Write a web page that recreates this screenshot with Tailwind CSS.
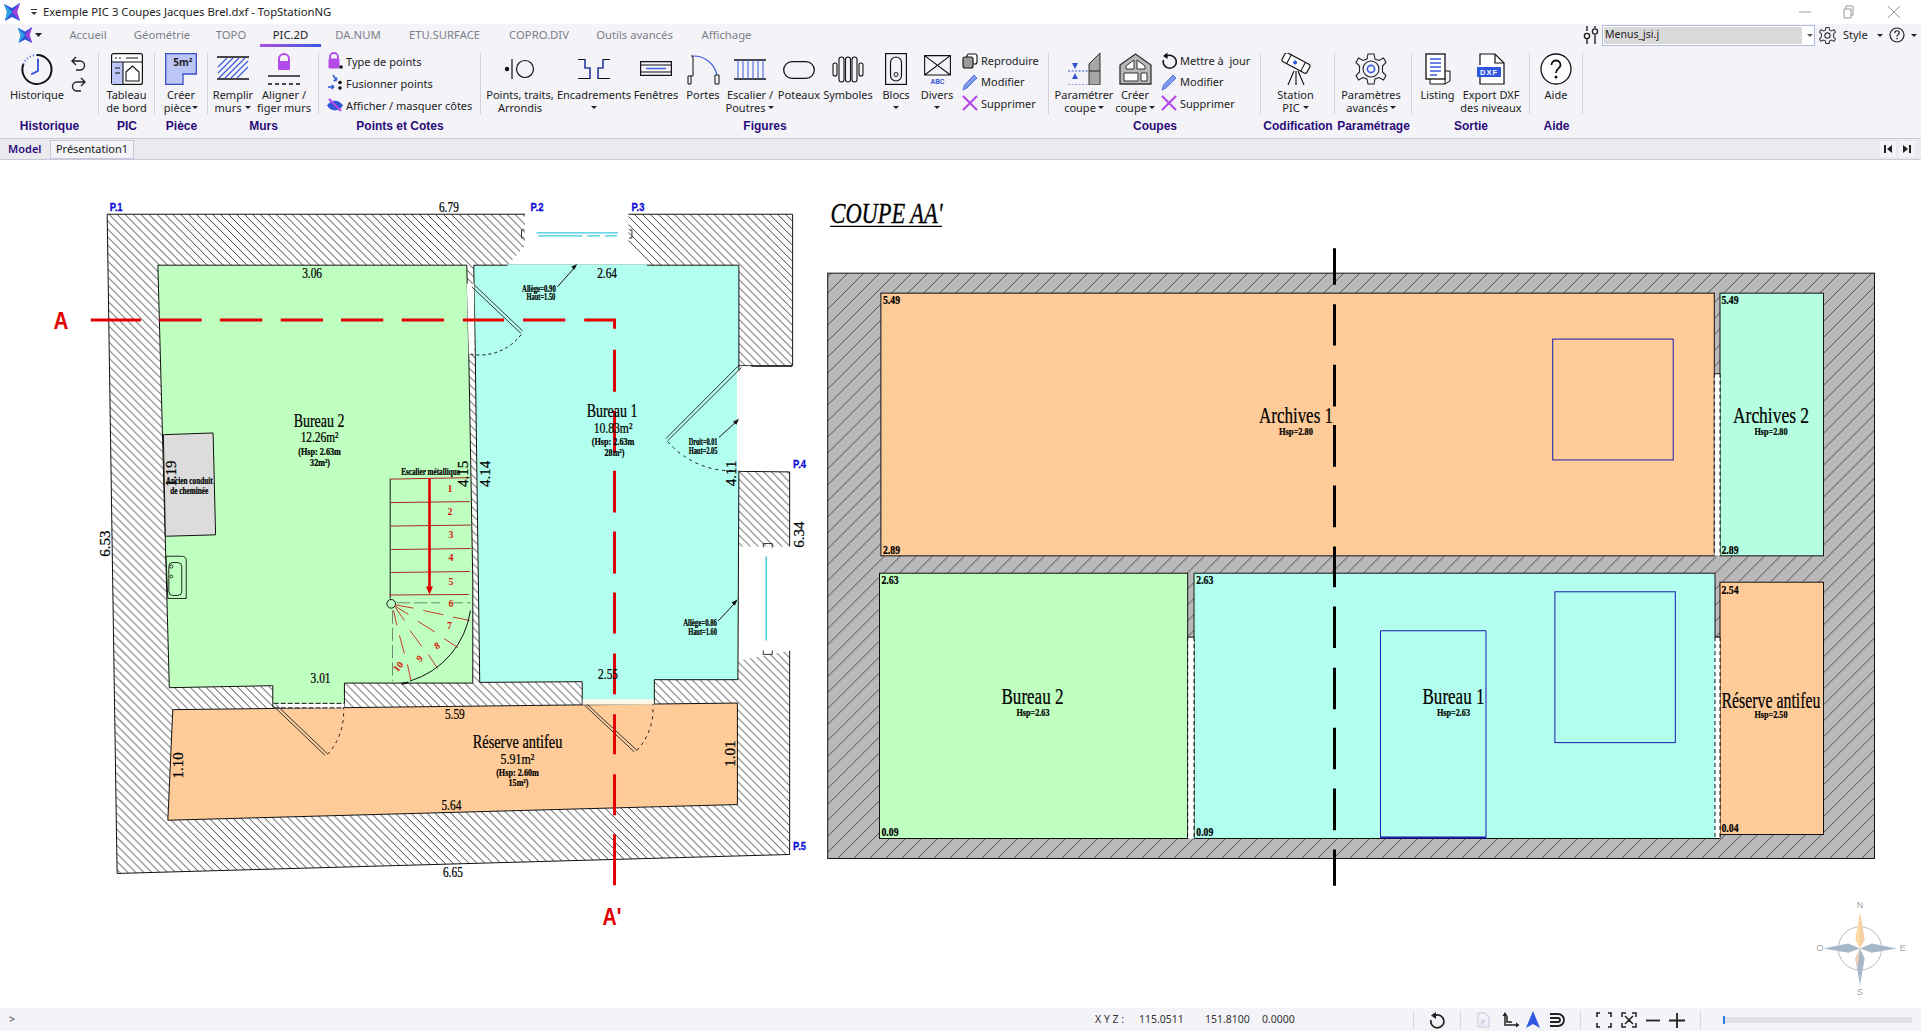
<!DOCTYPE html>
<html lang="fr">
<head>
<meta charset="utf-8">
<title>TopStationNG</title>
<script src="https://cdn.jsdelivr.net/npm/@tailwindcss/browser@4"></script>
</head>
<body class="bg-white">
<div class="w-[1921px] h-[1031px] flex flex-col overflow-hidden bg-white text-[#222] font-['Noto_Sans',sans-serif] text-[11px]">

  <!-- Title bar -->
  <div class="h-[24px] shrink-0 flex items-center bg-white">
    <svg class="ml-[2px] w-[20px] h-[20px]" viewBox="0 0 20 20"><path d="M2 2 L10 6 L18 1 L15 10 L18 19 L10 15 L3 19 L5 10 Z" fill="#2f56d8"/><path d="M2 2 L10 10 L3 19 L5 10Z" fill="#2aa5e0"/><path d="M18 1 L10 10 L18 19 L15 10Z" fill="#a23fdc"/></svg>
    <svg class="ml-[8px] w-[8px] h-[8px]" viewBox="0 0 8 8"><path d="M1 1.5H7" stroke="#333"/><path d="M1 4H7L4 7Z" fill="#333"/></svg>
    <span class="ml-[5px] text-[11.3px] whitespace-nowrap text-[#222]">Exemple PIC 3 Coupes Jacques Brel.dxf - TopStationNG</span>
    <div class="ml-auto flex items-center text-[#9a9a9a]">
      <svg class="w-[14px] h-[14px]" viewBox="0 0 14 14"><path d="M1 7H13" stroke="#999"/></svg>
      <svg class="ml-[29px] w-[14px] h-[14px]" viewBox="0 0 14 14"><path d="M3 4H10V13H3Z M5 4V1H12V10H10" fill="none" stroke="#999"/></svg>
      <svg class="ml-[32px] mr-[20px] w-[14px] h-[14px]" viewBox="0 0 14 14"><path d="M1 1L13 13M13 1L1 13" stroke="#999"/></svg>
    </div>
  </div>

  <!-- Ribbon -->
  <div class="h-[115px] shrink-0 bg-[#f3f3f8] border-b border-[#c9c7da] flex flex-col">
    <!-- tabs row -->
    <div class="h-[22px] shrink-0 flex items-center text-[#7d8088] text-[11.3px]">
      <div class="w-[56px] h-full flex items-center">
        <svg class="ml-[16px] w-[18px] h-[18px]" viewBox="0 0 20 20"><path d="M2 2 L10 6 L18 1 L15 10 L18 19 L10 15 L3 19 L5 10 Z" fill="#2f56d8"/><path d="M2 2 L10 10 L3 19 L5 10Z" fill="#2aa5e0"/><path d="M18 1 L10 10 L18 19 L15 10Z" fill="#a23fdc"/></svg>
        <svg class="ml-[1px] w-[7px] h-[4px]" viewBox="0 0 7 4"><path d="M0 0H7L3.5 4Z" fill="#222"/></svg>
      </div>
      <div class="w-[64px] text-center">Accueil</div>
      <div class="w-[84px] text-center">Géométrie</div>
      <div class="w-[54px] text-center">TOPO</div>
      <div class="ml-[2px] w-[61px] h-full flex items-center justify-center text-[#222] relative">PIC.2D
        <div class="absolute left-0 right-0 bottom-[-1px] h-[3px] bg-gradient-to-r from-[#a74fe0] to-[#3456dc]"></div>
      </div>
      <div class="w-[74px] text-center">DA.NUM</div>
      <div class="w-[99px] text-center">ETU.SURFACE</div>
      <div class="w-[90px] text-center">COPRO.DIV</div>
      <div class="w-[101px] text-center">Outils avancés</div>
      <div class="w-[83px] text-center">Affichage</div>
      <!-- right-hand tools -->
      <div class="ml-auto w-[340px] h-full flex items-center text-[#222]">
        <svg class="ml-[1px] w-[18px] h-[20px]" viewBox="0 0 18 20"><path d="M5 1V6M5 14V19M13 1V3M13 10V19" stroke="#222" stroke-width="1.4"/><circle cx="5" cy="11" r="2.6" fill="none" stroke="#222" stroke-width="1.4"/><circle cx="13" cy="6.5" r="2.6" fill="none" stroke="#222" stroke-width="1.4"/></svg>
        <div class="ml-[2px] w-[213px] h-[21px] border border-[#aebbdb] bg-white flex items-center p-[1px]">
          <div class="w-[198px] h-full bg-[#d9d9d9] pl-[1px] flex items-center text-[10.5px] text-[#222]">Menus_jsi.j</div>
          <svg class="ml-[5px] w-[6px] h-[3px]" viewBox="0 0 6 3"><path d="M0 0H6L3 3Z" fill="#555"/></svg>
        </div>
        <svg class="ml-[4px] w-[17px] h-[17px]" viewBox="0 0 32 32" fill="none"><path d="M13 1H19L20 6L24 7.5L28.5 5L31 9.500L27.500 13V19L31 22.500L28.500 27L24 24.500L20 26L19 31H13L12 26L8 24.500L3.500 27L1 22.500L4.500 19V13L1 9.500L3.500 5L8 7.500L12 6Z" stroke="#333" stroke-width="2"/><circle cx="16" cy="16" r="5" stroke="#333" stroke-width="2"/></svg>
        <span class="ml-[7px] text-[11px]">Style</span>
        <svg class="ml-[9px] w-[6px] h-[3px]" viewBox="0 0 6 3"><path d="M0 0H6L3 3Z" fill="#222"/></svg>
        <svg class="ml-[6px] w-[16px] h-[16px]" viewBox="0 0 16 16"><circle cx="8" cy="8" r="7" fill="none" stroke="#222" stroke-width="1.2"/><path d="M5.8 6c0-3 4.4-3 4.4 0 0 1.600-2.200 1.700-2.200 3.400" fill="none" stroke="#222" stroke-width="1.2"/><circle cx="8" cy="11.6" r=".8" fill="#222"/></svg>
        <svg class="ml-[6px] w-[6px] h-[3px]" viewBox="0 0 6 3"><path d="M0 0H6L3 3Z" fill="#222"/></svg>
      </div>
    </div>

    <!-- groups -->
    <div class="flex-1 flex pt-[7px] text-[11px] leading-[13px] text-center text-[#222]">

      <!-- Historique -->
      <div class="w-[99px] flex flex-col">
        <div class="h-[61px] border-r border-[#d2d2da] flex">
          <div class="ml-[3px] w-[68px] flex flex-col items-center">
            <div class="h-[35px]"><svg class="w-[34px] h-[33px]" viewBox="0 0 34 34"><path d="M17 2A15 15 0 1 1 3 11.5" fill="none" stroke="#111" stroke-width="2"/><path d="M3 11.5A15 15 0 0 1 17 2" fill="none" stroke="#3b5bdb" stroke-width="2" stroke-dasharray="1 2.4"/><path d="M18 6V18.5L11 22" fill="none" stroke="#3b5bdb" stroke-width="2"/></svg></div>
            <div class="whitespace-nowrap">Historique</div>
          </div>
          <div class="w-[14px] flex flex-col items-center">
            <svg class="mt-[2px] w-[17px] h-[18px] shrink-0" viewBox="0 0 17 18"><path d="M6 2L2 6L6 10M2 6H10A4.5 4.5 0 0 1 10 15H6" fill="none" stroke="#222" stroke-width="1.4"/></svg>
            <svg class="mt-[3px] w-[17px] h-[18px] shrink-0" viewBox="0 0 17 18"><path d="M11 2L15 6L11 10M15 6H7A4.5 4.5 0 0 0 7 15H11" fill="none" stroke="#222" stroke-width="1.4"/></svg>
          </div>
        </div>
        <div class="flex-1 flex items-center justify-center font-['Liberation_Sans',sans-serif] font-bold text-[12px] text-[#2c0c7a]">Historique</div>
      </div>

      <!-- PIC -->
      <div class="w-[56px] flex flex-col">
        <div class="h-[61px] border-r border-[#d2d2da] flex flex-col items-center">
          <div class="h-[35px]"><svg class="w-[32px] h-[32px]" viewBox="0 0 32 32"><rect x=".6" y=".6" width="30.8" height="30.8" rx="2" fill="#fff" stroke="#111" stroke-width="1.2"/><rect x="1" y="9" width="11" height="22" fill="#bcc6f7"/><path d="M1 9H31M12 9V31M4 5H6M8 5H10M15 5H27M4 15H9M4 20H9" stroke="#111" stroke-width="1.1" fill="none"/><path d="M15 19L21.5 13L28 19V28H15Z" fill="#fff" stroke="#111" stroke-width="1.1"/></svg></div>
          <div>Tableau</div><div class="whitespace-nowrap">de bord</div>
        </div>
        <div class="flex-1 flex items-center justify-center font-['Liberation_Sans',sans-serif] font-bold text-[12px] text-[#2c0c7a]">PIC</div>
      </div>

      <!-- Pièce -->
      <div class="w-[53px] flex flex-col">
        <div class="h-[61px] border-r border-[#d2d2da] flex flex-col items-center">
          <div class="h-[35px]"><svg class="w-[32px] h-[32px]" viewBox="0 0 32 32"><path d="M.7.7H31.3V21H18V31.3H.7Z" fill="#bcc6f7" stroke="#3a4fc4" stroke-width="1.3"/><text x="18" y="13" text-anchor="middle" font-size="10" font-weight="700" font-family="Noto Sans" fill="#222">5m²</text></svg></div>
          <div>Créer</div>
          <div class="flex items-center whitespace-nowrap">pièce<svg class="ml-[1px] w-[6px] h-[3px]" viewBox="0 0 6 3"><path d="M0 0H6L3 3Z" fill="#222"/></svg></div>
        </div>
        <div class="flex-1 flex items-center justify-center font-['Liberation_Sans',sans-serif] font-bold text-[12px] text-[#2c0c7a]">Pièce</div>
      </div>

      <!-- Murs -->
      <div class="w-[111px] flex flex-col">
        <div class="h-[61px] border-r border-[#d2d2da] flex">
          <div class="w-[50px] flex flex-col items-center">
            <div class="h-[35px] pt-[3px]"><svg class="w-[32px] h-[24px]" viewBox="0 0 32 24"><path d="M2 22L22 2M8 22L28 2M14 22L31 5M20 22L31 11M1 17L16 2M1 11L10 2" stroke="#3b5bdb" stroke-width="1.2"/><path d="M0 1H32M0 23H32" stroke="#111" stroke-width="1.4" fill="none"/></svg></div>
            <div>Remplir</div>
            <div class="flex items-center">murs<svg class="ml-[4px] w-[6px] h-[3px]" viewBox="0 0 6 3"><path d="M0 0H6L3 3Z" fill="#222"/></svg></div>
          </div>
          <div class="w-[52px] flex flex-col items-center">
            <div class="h-[35px]"><svg class="w-[32px] h-[32px]" viewBox="0 0 32 32"><path d="M11 8V5A5 5 0 0 1 21 5V8" transform="translate(0 1)" fill="none" stroke="#b44be8" stroke-width="2"/><rect x="10" y="8" width="12" height="9" rx="1" fill="#b44be8"/><path d="M0 23H32" stroke="#111" stroke-width="1.4"/><path d="M0 31H32" stroke="#111" stroke-width="1.4" stroke-dasharray="4 3"/></svg></div>
            <div class="whitespace-nowrap">Aligner /</div><div class="whitespace-nowrap">figer murs</div>
          </div>
        </div>
        <div class="flex-1 flex items-center justify-center font-['Liberation_Sans',sans-serif] font-bold text-[12px] text-[#2c0c7a]">Murs</div>
      </div>

      <!-- Points et Cotes -->
      <div class="w-[162px] flex flex-col">
        <div class="h-[61px] border-r border-[#d2d2da] pl-[8px]">
          <div class="-mt-[3px] flex flex-col text-left">
            <div class="h-[22px] flex items-center"><svg class="w-[16px] h-[18px] shrink-0" viewBox="0 0 16 18"><path d="M3 7V5A4 4 0 0 1 11 5V7" fill="none" stroke="#b44be8" stroke-width="1.8"/><rect x="1.5" y="6.5" width="11" height="10" rx="1.5" fill="#b44be8"/><circle cx="14" cy="15" r="1.8" fill="#111"/></svg><span class="ml-[3px] whitespace-nowrap">Type de points</span></div>
            <div class="h-[22px] flex items-center"><svg class="w-[16px] h-[18px] shrink-0" viewBox="0 0 16 18"><path d="M6 1L9.5 6.5M9.5 6.5V3.5M9.5 6.5H6.5M1 13H7M7 13L4.5 11M7 13L4.5 15" fill="none" stroke="#2f56d8" stroke-width="1.4"/><circle cx="13" cy="8.5" r="1.8" fill="#111"/><circle cx="13" cy="14" r="1.8" fill="#111"/></svg><span class="ml-[3px] whitespace-nowrap">Fusionner points</span></div>
            <div class="h-[22px] flex items-center"><svg class="w-[16px] h-[18px] shrink-0" viewBox="0 0 16 18"><path d="M0 9.5C4 3 12 3 16 9.5C12 16 4 16 0 9.5Z" fill="#2f56d8"/><path d="M2 3L14 15" stroke="#b44be8" stroke-width="2.4"/></svg><span class="ml-[3px] whitespace-nowrap">Afficher / masquer côtes</span></div>
          </div>
        </div>
        <div class="flex-1 flex items-center justify-center font-['Liberation_Sans',sans-serif] font-bold text-[12px] text-[#2c0c7a]">Points et Cotes</div>
      </div>

      <!-- Figures -->
      <div class="w-[568px] flex flex-col">
        <div class="h-[61px] border-r border-[#d2d2da] flex">
          <div class="w-[78px] flex flex-col items-center">
            <div class="h-[35px] pt-[5px]"><svg class="w-[32px] h-[22px]" viewBox="0 0 32 22"><circle cx="3" cy="11" r="2.2" fill="#111"/><path d="M8 1V21" stroke="#111" stroke-width="1.2"/><circle cx="21" cy="11" r="8.5" fill="none" stroke="#111" stroke-width="1.2"/></svg></div>
            <div class="whitespace-nowrap">Points, traits,</div><div>Arrondis</div>
          </div>
          <div class="w-[70px] flex flex-col items-center">
            <div class="h-[35px] pt-[5px]"><svg class="w-[32px] h-[22px]" viewBox="0 0 32 22"><path d="M0 1.500H7V10H12V20.500H0" fill="none" stroke="#111" stroke-width="1.2"/><path d="M32 1.500H25V10H20V20.500H32" fill="none" stroke="#111" stroke-width="1.2"/><path d="M7 1.500V10H12V20.500M25 1.500V10H20V20.500" fill="none" stroke="#3b5bdb" stroke-width="1.2"/></svg></div>
            <div>Encadrements</div>
            <svg class="mt-[5px] w-[6px] h-[3px]" viewBox="0 0 6 3"><path d="M0 0H6L3 3Z" fill="#222"/></svg>
          </div>
          <div class="w-[54px] flex flex-col items-center">
            <div class="h-[35px] pt-[8px]"><svg class="w-[32px] h-[15px]" viewBox="0 0 32 15"><path d="M.6.6H31.400V14.400H.6Z" fill="none" stroke="#111" stroke-width="1.2"/><path d="M0 4H32M0 11H32" stroke="#111"/><path d="M6 7.500H26" stroke="#3b5bdb" stroke-width="1.4"/></svg></div>
            <div>Fenêtres</div>
          </div>
          <div class="w-[40px] flex flex-col items-center">
            <div class="h-[35px] pt-[2px]"><svg class="w-[33px] h-[30px]" viewBox="0 0 33 30"><path d="M4 1H6V21H4V29H1V21H4" fill="none" stroke="#111" stroke-width="1"/><path d="M28 20H32V29H28Z" fill="none" stroke="#111"/><path d="M6 1A24 24 0 0 1 30 20" fill="none" stroke="#3b5bdb" stroke-width="1.2"/></svg></div>
            <div>Portes</div>
          </div>
          <div class="w-[54px] flex flex-col items-center">
            <div class="h-[35px] pt-[6px]"><svg class="w-[32px] h-[21px]" viewBox="0 0 32 21"><path d="M0 1H32M0 20H32" stroke="#111" stroke-width="1.4"/><path d="M4 1V20M9 1V20M14 1V20M19 1V20M24 1V20M29 1V20" stroke="#3b5bdb"/></svg></div>
            <div class="whitespace-nowrap">Escalier /</div>
            <div class="flex items-center">Poutres<svg class="ml-[3px] w-[6px] h-[3px]" viewBox="0 0 6 3"><path d="M0 0H6L3 3Z" fill="#222"/></svg></div>
          </div>
          <div class="w-[44px] flex flex-col items-center">
            <div class="h-[35px] pt-[8px]"><svg class="w-[32px] h-[18px]" viewBox="0 0 32 18"><rect x=".7" y=".7" width="30.6" height="16.6" rx="8.3" fill="none" stroke="#111" stroke-width="1.3"/></svg></div>
            <div>Poteaux</div>
          </div>
          <div class="w-[54px] flex flex-col items-center">
            <div class="h-[35px] pt-[3px]"><svg class="w-[32px] h-[27px]" viewBox="0 0 32 27"><g fill="none" stroke="#111" stroke-width="1.1"><rect x="1" y="7" width="4" height="13" rx="2"/><rect x="7" y="1" width="5" height="25" rx="2.5"/><rect x="13.5" y="1" width="5" height="25" rx="2.5"/><rect x="20" y="1" width="5" height="25" rx="2.5"/><rect x="27" y="7" width="4" height="13" rx="2"/></g></svg></div>
            <div>Symboles</div>
          </div>
          <div class="w-[42px] flex flex-col items-center">
            <div class="h-[35px]"><svg class="w-[22px] h-[32px]" viewBox="0 0 22 32"><rect x=".6" y=".6" width="20.8" height="30.8" fill="none" stroke="#111" stroke-width="1.2"/><rect x="5.5" y="4" width="11" height="24" rx="5.5" fill="none" stroke="#111" stroke-width="1.2"/><circle cx="11" cy="21.5" r="2" fill="none" stroke="#111"/></svg></div>
            <div>Blocs</div>
            <svg class="mt-[5px] w-[6px] h-[3px]" viewBox="0 0 6 3"><path d="M0 0H6L3 3Z" fill="#222"/></svg>
          </div>
          <div class="w-[40px] flex flex-col items-center">
            <div class="h-[35px] pt-[2px]"><svg class="w-[27px] h-[30px]" viewBox="0 0 27 30"><path d="M.6.6H26.400V20H.6ZM.6.6L26.400 20M26.400.6L.6 20" fill="none" stroke="#111" stroke-width="1.1"/><text x="13.5" y="29" text-anchor="middle" font-size="7.5" font-weight="700" font-family="Liberation Sans" fill="#2f56d8" textLength="14" lengthAdjust="spacingAndGlyphs">ABC</text></svg></div>
            <div>Divers</div>
            <svg class="mt-[5px] w-[6px] h-[3px]" viewBox="0 0 6 3"><path d="M0 0H6L3 3Z" fill="#222"/></svg>
          </div>
          <div class="pl-[5px] -mt-[3px] flex flex-col text-left">
            <div class="h-[22px] flex items-center"><svg class="w-[16px] h-[18px] shrink-0" viewBox="0 0 16 18"><rect x="5" y="2" width="10" height="10" rx="2" fill="#fff" stroke="#111" stroke-width="1.1"/><rect x="1" y="5" width="10" height="11" rx="2" fill="#9a9a9a" stroke="#111" stroke-width="1.1"/></svg><span class="ml-[3px]">Reproduire</span></div>
            <div class="h-[22px] flex items-center"><svg class="w-[16px] h-[18px] shrink-0" viewBox="0 0 16 18"><path d="M1 17L2.500 12L12 2L15 5L5 15Z" fill="#7f9bec" stroke="#3b5bdb" stroke-width=".8"/></svg><span class="ml-[3px]">Modifier</span></div>
            <div class="h-[22px] flex items-center"><svg class="w-[16px] h-[18px] shrink-0" viewBox="0 0 16 18"><path d="M1 2L15 16M15 2L1 16" stroke="#b44be8" stroke-width="2.2"/></svg><span class="ml-[3px]">Supprimer</span></div>
          </div>
        </div>
        <div class="flex-1 flex items-center justify-center font-['Liberation_Sans',sans-serif] font-bold text-[12px] text-[#2c0c7a]">Figures</div>
      </div>

      <!-- Coupes -->
      <div class="w-[212px] flex flex-col">
        <div class="h-[61px] border-r border-[#d2d2da] flex">
          <div class="w-[70px] flex flex-col items-center">
            <div class="h-[35px]"><svg class="w-[33px] h-[32px]" viewBox="0 0 33 32"><path d="M21 32V11L32 0V32Z" fill="#a6a6a6" stroke="#333"/><path d="M21 18H32" stroke="#222"/><path d="M0 18H21" stroke="#2f56d8" stroke-dasharray="2 1.5"/><path d="M0 32H21" stroke="#2f56d8" stroke-dasharray="2 1.5"/><path d="M4 10L7 16L10 10ZM4 26L7 20L10 26Z" fill="#2f56d8"/></svg></div>
            <div class="whitespace-nowrap">Paramétrer</div>
            <div class="flex items-center">coupe<svg class="ml-[2px] w-[6px] h-[3px]" viewBox="0 0 6 3"><path d="M0 0H6L3 3Z" fill="#222"/></svg></div>
          </div>
          <div class="w-[32px] flex flex-col items-center">
            <div class="h-[35px] shrink-0"><svg class="w-[33px] h-[32px]" viewBox="0 0 33 32"><path d="M1 12L16.5 1L32 12V31H1Z" fill="#b8b8b8" stroke="#333" stroke-width="1.3"/><path d="M15 7L7 13V16H15ZM18 7V16H26V13ZM5 20H19V28H5ZM22 20H28V28H22Z" fill="#fff" stroke="#333"/></svg></div>
            <div>Créer</div>
            <div class="flex items-center shrink-0">coupe<svg class="ml-[2px] w-[6px] h-[3px]" viewBox="0 0 6 3"><path d="M0 0H6L3 3Z" fill="#222"/></svg></div>
          </div>
          <div class="pl-[10px] -mt-[3px] flex flex-col text-left">
            <div class="h-[22px] flex items-center"><svg class="w-[16px] h-[18px] shrink-0" viewBox="0 0 16 18"><path d="M5 4.500A6.500 6.500 0 1 1 2.500 8" fill="none" stroke="#111" stroke-width="1.6"/><path d="M6.500 0.500L6.500 7L2 4Z" fill="#111"/></svg><span class="ml-[3px] whitespace-pre">Mettre à  jour</span></div>
            <div class="h-[22px] flex items-center"><svg class="w-[16px] h-[18px] shrink-0" viewBox="0 0 16 18"><path d="M1 17L2.500 12L12 2L15 5L5 15Z" fill="#7f9bec" stroke="#3b5bdb" stroke-width=".8"/></svg><span class="ml-[3px]">Modifier</span></div>
            <div class="h-[22px] flex items-center"><svg class="w-[16px] h-[18px] shrink-0" viewBox="0 0 16 18"><path d="M1 2L15 16M15 2L1 16" stroke="#b44be8" stroke-width="2.2"/></svg><span class="ml-[3px]">Supprimer</span></div>
          </div>
        </div>
        <div class="flex-1 flex items-center justify-center font-['Liberation_Sans',sans-serif] font-bold text-[12px] text-[#2c0c7a]">Coupes</div>
      </div>

      <!-- Codification -->
      <div class="w-[74px] flex flex-col">
        <div class="h-[61px] border-r border-[#d2d2da] pr-[4px] flex flex-col items-center">
          <div class="h-[35px]"><svg class="w-[32px] h-[32px]" viewBox="0 0 32 32"><g transform="rotate(28 16 10)"><rect x="2" y="5" width="28" height="10" rx="2" fill="#fff" stroke="#111" stroke-width="1.2"/><path d="M8 5V15M24 5V15" stroke="#111"/><circle cx="15" cy="10" r="2" fill="#2f56d8"/></g><path d="M14 18L8 32M16 18V32M18 18L24 32" stroke="#111" stroke-width="1.1"/></svg></div>
          <div>Station</div>
          <div class="flex items-center">PIC<svg class="ml-[3px] w-[6px] h-[3px]" viewBox="0 0 6 3"><path d="M0 0H6L3 3Z" fill="#222"/></svg></div>
        </div>
        <div class="flex-1 flex items-center justify-center font-['Liberation_Sans',sans-serif] font-bold text-[12px] text-[#2c0c7a]">Codification</div>
      </div>

      <!-- Paramétrage -->
      <div class="w-[77px] flex flex-col">
        <div class="h-[61px] border-r border-[#d2d2da] pr-[4px] flex flex-col items-center">
          <div class="h-[35px]"><svg class="w-[32px] h-[32px]" viewBox="0 0 32 32" fill="none"><path d="M13 1H19L20 6L24 7.500L28.500 5L31 9.500L27.500 13V19L31 22.500L28.500 27L24 24.500L20 26L19 31H13L12 26L8 24.500L3.500 27L1 22.500L4.500 19V13L1 9.500L3.500 5L8 7.500L12 6Z" stroke="#222" stroke-width="1.1"/><circle cx="16" cy="16" r="8" stroke="#222" stroke-width="1.1"/><circle cx="16" cy="16" r="3.600" stroke="#3b5bdb" stroke-width="1.6"/></svg></div>
          <div class="whitespace-nowrap">Paramètres</div>
          <div class="flex items-center">avancés<svg class="ml-[2px] w-[6px] h-[3px]" viewBox="0 0 6 3"><path d="M0 0H6L3 3Z" fill="#222"/></svg></div>
        </div>
        <div class="flex-1 flex items-center justify-center font-['Liberation_Sans',sans-serif] font-bold text-[12px] text-[#2c0c7a]">Paramétrage</div>
      </div>

      <!-- Sortie -->
      <div class="w-[118px] flex flex-col">
        <div class="h-[61px] border-r border-[#d2d2da] flex">
          <div class="w-[51px] flex flex-col items-center">
            <div class="h-[35px]"><svg class="w-[26px] h-[32px]" viewBox="0 0 26 32"><path d="M5 25H1" stroke="#111"/><path d="M20 25V31H5V25" fill="#fff" stroke="#111"/><rect x="1" y="1" width="19" height="25" fill="#fff" stroke="#111" stroke-width="1.3"/><path d="M5 6H16M5 10H16M5 14H16M5 18H16M5 22H12" stroke="#3b5bdb" stroke-width="1.4"/><path d="M20 18H25V28L20 31" fill="none" stroke="#111"/></svg></div>
            <div>Listing</div>
          </div>
          <div class="w-[56px] flex flex-col items-center">
            <div class="h-[35px]"><svg class="w-[28px] h-[32px]" viewBox="0 0 28 32"><path d="M3 12V1H18L27 10V31H3V22" fill="#fff" stroke="#111" stroke-width="1.2"/><path d="M18 1V10H27" fill="none" stroke="#111" stroke-width="1.2"/><rect x="0" y="14" width="24" height="10" fill="#2f56e0"/><text x="12" y="22" text-anchor="middle" font-size="7.5" font-weight="700" font-family="Liberation Sans" letter-spacing="1" fill="#fff">DXF</text></svg></div>
            <div class="whitespace-nowrap">Export DXF</div><div class="whitespace-nowrap">des niveaux</div>
          </div>
        </div>
        <div class="flex-1 flex items-center justify-center font-['Liberation_Sans',sans-serif] font-bold text-[12px] text-[#2c0c7a]">Sortie</div>
      </div>

      <!-- Aide -->
      <div class="w-[53px] flex flex-col">
        <div class="h-[61px] border-r border-[#d2d2da] flex flex-col items-center">
          <div class="h-[35px]"><svg class="w-[32px] h-[32px]" viewBox="0 0 32 32"><circle cx="16" cy="16" r="15" fill="#fff" stroke="#111" stroke-width="1.3"/><path d="M11.5 12C11.5 6 20.5 6 20.5 12C20.5 15.5 16 15.5 16 20" fill="none" stroke="#111" stroke-width="1.8"/><circle cx="16" cy="24" r="1.5" fill="#111"/></svg></div>
          <div>Aide</div>
        </div>
        <div class="flex-1 flex items-center justify-center font-['Liberation_Sans',sans-serif] font-bold text-[12px] text-[#2c0c7a]">Aide</div>
      </div>
    </div>
  </div>

  <!-- Layout tabs -->
  <div class="h-[21px] shrink-0 bg-[#eaeaef] border-b border-[#c9c7da] flex items-center text-[11px]">
    <span class="ml-[8px] w-[42px] font-semibold text-[#2c0c7a]">Model</span>
    <div class="w-[84px] h-[19px] border border-[#c9c7da] bg-[#f3f3f8] flex items-center justify-center text-[#222]">Présentation1</div>
    <div class="ml-auto flex items-center mr-[6px] gap-[3px]">
      <div class="w-[16px] h-[16px] bg-[#f3f3f8] flex items-center justify-center"><svg class="w-[8px] h-[8px]" viewBox="0 0 8 8"><path d="M0 0H2V8H0ZM8 0V8L3 4Z" fill="#222"/></svg></div>
      <div class="w-[16px] h-[16px] bg-[#f3f3f8] flex items-center justify-center"><svg class="w-[8px] h-[8px]" viewBox="0 0 8 8"><path d="M8 0H6V8H8ZM0 0V8L5 4Z" fill="#222"/></svg></div>
    </div>
  </div>

  <!-- Drawing canvas -->
  <svg class="flex-1 block w-full min-h-0" viewBox="0 159 1921 849" preserveAspectRatio="none" xmlns="http://www.w3.org/2000/svg">
    <defs>
      <pattern id="h1" patternUnits="userSpaceOnUse" width="8" height="8"><path d="M-1 -1L9 9M-1 7L1 9M7 -1L9 1" stroke="#111" stroke-width=".8"/></pattern>
      <pattern id="h2" patternUnits="userSpaceOnUse" width="16" height="16"><rect width="16" height="16" fill="#b9b9b9"/><path d="M-1 17L17 -1M-1 1L1 -1M15 17L17 15" stroke="#222" stroke-width=".7"/></pattern>
    </defs>

    <!-- ============ FLOOR PLAN ============ -->
    <g transform="translate(.2 0) scale(.99488 1)">
    <path d="M107.5 213.3H796.5V365H742.5V470.7L793.5 471.3V854.3L117.5 873.3Z" fill="url(#h1)" stroke="#111" stroke-width="1"/>
    <!-- window top -->
    <path d="M527.5 212H631.500V245L650 264.500H510L527.500 245Z" fill="#fff"/>
    <path d="M527 229H524V237H527M632 229H635V237H632" fill="none" stroke="#333"/>
    <path d="M539 232H621" stroke="#3cc8e0" stroke-width="1.2"/>
    <path d="M541 235H585M590 235H603M608 235H620" stroke="#3cc8e0" stroke-width="1.2"/>
    <!-- window right -->
    <path d="M742 546H795V650L742 660Z" fill="#fff"/>
    <path d="M767 547V543H776V547M767 650V654H776V650" fill="none" stroke="#333"/>
    <path d="M770 556V640" stroke="#3cc8e0" stroke-width="1.4"/>
    <!-- door opening right -->
    <path d="M742.5 365.500H760V470H742.500Z" fill="#fff"/>
    <path d="M796 365.500H755" stroke="#111"/>
    <!-- rooms -->
    <path d="M158.5 264.3H469L471 353L475 580V682.7H346V706.7H274V685.3L170 687.3Z" fill="#bfffbf" stroke="#111" stroke-width="1"/>
    <path d="M476 264.3H742.5V467L741.5 679.3H657.5V703.3L585 704V681.3L482 682L477.5 353Z" fill="#b3ffef" stroke="#111" stroke-width="1"/>
    <path d="M173.5 709.3L741 702.7V804.3L168.5 820Z" fill="#ffcc99" stroke="#111" stroke-width="1"/>
    <!-- top window over room edge -->
    <path d="M510 263.500H650V265.500H510Z" fill="#b3ffef"/>
    <!-- door 1 gap between rooms -->
    <path d="M469 283H476.500V353H471Z" fill="#fff"/>
    <path d="M474 286L523.500 332.700M476.500 284L525 330" stroke="#333" fill="none"/>
    <path d="M523.500 334A52 52 0 0 1 471 353" fill="none" stroke="#111" stroke-dasharray="3 3"/>
    <!-- door 2 -->
    <path d="M742 370V470" stroke="#fff" stroke-width="3"/>
    <path d="M745 366.700L671 440M743 364L669 438" stroke="#333" fill="none"/>
    <path d="M671 441A85 85 0 0 0 740 470" fill="none" stroke="#111" stroke-dasharray="3 4"/>
    <!-- door 3 -->
    <path d="M275 703H346V708H275Z" fill="#fff"/>
    <path d="M275 703H346M275 707.500H346" stroke="#111" stroke-dasharray="5 2"/>
    <path d="M275 706L326.500 755M277 704L329 753.500" stroke="#333" fill="none"/>
    <path d="M329 754A62 62 0 0 0 345 707" fill="none" stroke="#111" stroke-dasharray="3 4"/>
    <!-- door 4 -->
    <path d="M585.500 699H657V704.500H585.500Z" fill="#fdf6e4"/>
    <path d="M587.500 705L637.500 751.700M590 704L640 750" stroke="#333" fill="none"/>
    <path d="M640 750A60 60 0 0 0 656 704" fill="none" stroke="#111" stroke-dasharray="3 4"/>

    <!-- chimney -->
    <path d="M164 434L214 432.300L216.500 534.300L166 535.700Z" fill="#dcdcdc" stroke="#111"/>
    <!-- sink -->
    <path d="M166.500 555.700H182Q187 555.700 187 560V598H168.500Z" fill="none" stroke="#111" stroke-width=".9"/>
    <rect x="169.500" y="562" width="13" height="33" rx="4" fill="none" stroke="#111" stroke-width=".9"/>
    <circle cx="172" cy="566" r="1.6" fill="none" stroke="#111" stroke-width=".8"/>
    <circle cx="172" cy="576" r="1.4" fill="none" stroke="#111" stroke-width=".8"/>

    <!-- stairs -->
    <g>
      <path d="M392 478V598" stroke="#111" stroke-width="1"/>
      <path d="M392 478.500L472 477M392 502L472 501M392 525.500L473 524.500M393 549L473 548M393 572L472 571M391 594.500L471 594" stroke="#a92a1e" stroke-width="1"/>
      <path d="M431.500 478V590" stroke="#e00000" stroke-width="2.6"/>
      <path d="M428 586L431.500 594L435 586Z" fill="#e00000"/>
    </g>
    <g transform="translate(382 560) scale(.3333)">
      <circle cx="33" cy="130" r="13" fill="none" stroke="#111" stroke-width="3"/>
      <path d="M50 127H180M210 127H272M37 150V362" stroke="#6d8a6d" stroke-width="3" stroke-dasharray="40 12" fill="none"/>
      <path d="M45 133L100 143M45 137L85 162M45 140L73 180M40 150L50 195M130 150L190 163M113 182L165 215M90 210L125 258M58 225L73 280M193 235L235 262M145 282L173 325M82 312L93 362M220 170L270 180" stroke="#c63a2a" stroke-width="3" fill="none"/>
      <path d="M272 150A260 260 0 0 1 90 362" fill="none" stroke="#111" stroke-width="3"/>
      <path d="M65 370L85 366" stroke="#111" stroke-width="6"/>
    </g>
    <g font-family="Liberation Serif" font-size="10" font-weight="700" fill="#d91a10" text-anchor="middle" dominant-baseline="central">
      <text x="452" y="487.7">1</text><text x="452" y="510.7">2</text><text x="453" y="534">3</text><text x="453" y="557">4</text><text x="453" y="580.7">5</text><text x="453" y="603.3">6</text><text x="451.5" y="625">7</text><text x="439" y="645" transform="rotate(-30 439 645)">8</text><text x="421.5" y="658" transform="rotate(-40 421.5 658)">9</text><text x="400" y="666" transform="rotate(-50 400 666)">10</text>
    </g>

    <!-- leaders -->
    <path d="M560 286L578 266" stroke="#111"/><path d="M580 263L574 266L577 269Z" fill="#111"/>
    <path d="M722.500 436.700L741 420" stroke="#111"/><path d="M742.500 418L736.500 421L740 424Z" fill="#111"/>
    <path d="M721.500 620.700L740 601" stroke="#111"/><path d="M741 599L735 602L738.500 605Z" fill="#111"/>

    <!-- red section line -->
    <g fill="none" stroke="#e00000" stroke-width="3">
      <path d="M91 319.300H141.500M160 319.300H202.500M221 319.300H263.500M282 319.300H324.500M342.500 319.300H385M403.500 319.300H446M465 319.300H506.500M525.500 319.300H568M587 319.300H619"/>
      <path d="M617.500 319V328M617.500 349V391M617.500 410V452M617.500 470V512M617.500 531V573M617.500 592V633M617.500 653V694M617.500 714V754M617.500 774V815M617.500 834V885"/>
    </g>
    <g font-family="Liberation Sans" font-weight="700" fill="#e00000" text-anchor="middle" dominant-baseline="central" font-size="24">
      <text x="61" y="320" textLength="15" lengthAdjust="spacingAndGlyphs">A</text>
      <text x="615" y="916" textLength="19" lengthAdjust="spacingAndGlyphs">A'</text>
    </g>

    <!-- plan labels -->
    <g font-family="Liberation Sans" font-weight="700" font-size="11" fill="#0c0cd8" stroke="#0c0cd8" stroke-width=".3" text-anchor="middle" dominant-baseline="central">
      <text x="116.500" y="205.700" textLength="13" lengthAdjust="spacingAndGlyphs">P.1</text>
      <text x="539.500" y="205.700" textLength="13" lengthAdjust="spacingAndGlyphs">P.2</text>
      <text x="641" y="205.700" textLength="13" lengthAdjust="spacingAndGlyphs">P.3</text>
      <text x="803.500" y="463.300" textLength="13" lengthAdjust="spacingAndGlyphs">P.4</text>
      <text x="803.500" y="846" textLength="13" lengthAdjust="spacingAndGlyphs">P.5</text>
    </g>
    <g font-family="Liberation Serif" fill="#000" stroke="#000" stroke-width=".25" text-anchor="middle" dominant-baseline="central">
      <g font-size="15">
        <text x="451" y="206" textLength="20" lengthAdjust="spacingAndGlyphs">6.79</text>
        <text x="313.500" y="272.300" textLength="20" lengthAdjust="spacingAndGlyphs">3.06</text>
        <text x="610" y="272.300" textLength="20" lengthAdjust="spacingAndGlyphs">2.64</text>
        <text x="322" y="677.700" textLength="20" lengthAdjust="spacingAndGlyphs">3.01</text>
        <text x="611" y="673.300" textLength="20" lengthAdjust="spacingAndGlyphs">2.55</text>
        <text x="457" y="713.300" textLength="20" lengthAdjust="spacingAndGlyphs">5.59</text>
        <text x="453.500" y="805" textLength="20" lengthAdjust="spacingAndGlyphs">5.64</text>
        <text x="455" y="871.700" textLength="20" lengthAdjust="spacingAndGlyphs">6.65</text>
        <text x="105" y="543" transform="rotate(-90 105 543)">6.53</text>
        <text x="802.500" y="534" transform="rotate(-90 802.500 534)">6.34</text>
        <text x="487.500" y="473.300" transform="rotate(-90 487.500 473.300)">4.14</text>
        <text x="735" y="472.700" transform="rotate(-90 735 472.700)">4.11</text>
        <text x="465" y="473.300" transform="rotate(-90 465 473.300)">4.15</text>
        <text x="171.500" y="473" transform="rotate(-90 171.500 473)">1.19</text>
        <text x="178.500" y="765" transform="rotate(-90 178.500 765)">1.10</text>
        <text x="733.500" y="753.300" transform="rotate(-90 733.500 753.300)">1.01</text>
      </g>
      <g font-size="18">
        <text x="320.500" y="420" textLength="51" lengthAdjust="spacingAndGlyphs">Bureau 2</text>
        <text x="615" y="410.700" textLength="51" lengthAdjust="spacingAndGlyphs">Bureau 1</text>
        <text x="520" y="741.700" textLength="90" lengthAdjust="spacingAndGlyphs">Réserve antifeu</text>
      </g>
      <g font-size="14">
        <text x="321" y="437.300" textLength="38" lengthAdjust="spacingAndGlyphs">12.26m²</text>
        <text x="616" y="427.700" textLength="39" lengthAdjust="spacingAndGlyphs">10.83m²</text>
        <text x="520" y="759" textLength="34" lengthAdjust="spacingAndGlyphs">5.91m²</text>
      </g>
      <g font-size="11" font-weight="700">
        <text x="321" y="450" textLength="43" lengthAdjust="spacingAndGlyphs">(Hsp: 2.63m</text>
        <text x="321.500" y="461" textLength="20" lengthAdjust="spacingAndGlyphs">32m²)</text>
        <text x="616" y="440.700" textLength="43" lengthAdjust="spacingAndGlyphs">(Hsp: 2.63m</text>
        <text x="617.500" y="451" textLength="20" lengthAdjust="spacingAndGlyphs">28m²)</text>
        <text x="520" y="771.700" textLength="43" lengthAdjust="spacingAndGlyphs">(Hsp: 2.60m</text>
        <text x="521" y="781.700" textLength="20" lengthAdjust="spacingAndGlyphs">15m²)</text>
      </g>
      <g font-size="10" font-weight="700">
        <text x="541.500" y="287.700" textLength="34" lengthAdjust="spacingAndGlyphs">Allège=0.90</text>
        <text x="543.500" y="296" textLength="29" lengthAdjust="spacingAndGlyphs">Haut=1.50</text>
        <text x="706.500" y="441.300" textLength="29" lengthAdjust="spacingAndGlyphs">Droit=0.01</text>
        <text x="706.500" y="450" textLength="29" lengthAdjust="spacingAndGlyphs">Haut=2.05</text>
        <text x="703.500" y="622.300" textLength="34" lengthAdjust="spacingAndGlyphs">Allège=0.86</text>
        <text x="706" y="630.700" textLength="29" lengthAdjust="spacingAndGlyphs">Haut=1.60</text>
        <text x="432.500" y="471" textLength="59" lengthAdjust="spacingAndGlyphs">Escalier métallique</text>
        <text x="190" y="480" textLength="47" lengthAdjust="spacingAndGlyphs">Ancien conduit</text>
        <text x="190" y="490" textLength="38" lengthAdjust="spacingAndGlyphs">de cheminée</text>
      </g>
    </g>
    </g>

    <!-- ============ SECTION ============ -->
    <text x="886.5" y="212.3" font-family="Liberation Serif" font-style="italic" font-size="29" stroke="#000" stroke-width=".35" text-anchor="middle" dominant-baseline="central" textLength="112" lengthAdjust="spacingAndGlyphs" fill="#000">COUPE AA'</text>
    <path d="M830 225.5H942" stroke="#000" stroke-width="1.2"/>
    <rect x="827.7" y="272.3" width="1046.8" height="586" fill="url(#h2)" stroke="#111" stroke-width="1"/>
    <g stroke="#111" stroke-width="1">
      <rect x="880.9" y="292.3" width="833.4" height="263" fill="#ffcc99"/>
      <rect x="1720" y="292.3" width="103.5" height="263" fill="#b5ffe0"/>
      <rect x="879.5" y="572.7" width="308.2" height="265.6" fill="#bfffbf"/>
      <path d="M1194 572.7H1715V636.7H1720V838.3H1194Z" fill="#b3ffef"/>
      <rect x="1720" y="581.7" width="103.5" height="252.6" fill="#ffcc99"/>
    </g>
    <!-- white dashed door strips -->
    <rect x="1714.5" y="373" width="5.5" height="182" fill="#fff"/>
    <path d="M1714.3 373V555M1720 373V555" stroke="#111" stroke-dasharray="4 3"/>
    <path d="M1714 373H1720" stroke="#111"/>
    <rect x="1188" y="636.7" width="6" height="201.6" fill="#fff"/>
    <path d="M1187.7 636.7V838M1194 636.7V838" stroke="#111" stroke-dasharray="4 3"/>
    <path d="M1187.7 636.7H1194" stroke="#111"/>
    <rect x="1715" y="636.7" width="5" height="201.6" fill="#fff"/>
    <path d="M1715 636.7V838M1720 636.7V838" stroke="#111" stroke-dasharray="4 3"/>
    <path d="M1715 636.7H1720" stroke="#111"/>
    <path d="M1194 838.3H1720" stroke="#111"/>
    <!-- blue openings -->
    <g fill="none" stroke="#1a1ab0" stroke-width="1">
      <rect x="1552.7" y="338.3" width="120.5" height="121"/>
      <path d="M1380.5 837.3V630.3H1486V837.3"/>
      <path d="M1380.5 837.3H1486" stroke-width="2"/>
      <rect x="1554.9" y="591.3" width="120.4" height="151"/>
    </g>
    <!-- black section line -->
    <path d="M1334.5 247.3V284M1334.5 303.3V344.7M1334.5 364V405.7M1334.5 424.3V466M1334.5 485V526.7M1334.5 546V586.7M1334.5 606V647.7M1334.5 667.3V709M1334.5 727.3V769M1334.5 788.3V830M1334.5 849.3V885.7" stroke="#000" stroke-width="3" fill="none"/>

    <g font-family="Liberation Serif" fill="#000" stroke="#000" stroke-width=".25" text-anchor="middle" dominant-baseline="central">
      <g font-size="24">
        <text x="1296" y="414.3" textLength="74" lengthAdjust="spacingAndGlyphs">Archives 1</text>
        <text x="1771" y="414.3" textLength="76" lengthAdjust="spacingAndGlyphs">Archives 2</text>
        <text x="1032.5" y="696" textLength="62" lengthAdjust="spacingAndGlyphs">Bureau 2</text>
        <text x="1453.5" y="696" textLength="62" lengthAdjust="spacingAndGlyphs">Bureau 1</text>
        <text x="1771" y="699.3" textLength="99" lengthAdjust="spacingAndGlyphs">Réserve antifeu</text>
      </g>
      <g font-size="11" font-weight="700">
        <text x="1296" y="430.7" textLength="34" lengthAdjust="spacingAndGlyphs">Hsp=2.80</text>
        <text x="1771" y="430.7" textLength="33" lengthAdjust="spacingAndGlyphs">Hsp=2.80</text>
        <text x="1033" y="712" textLength="33" lengthAdjust="spacingAndGlyphs">Hsp=2.63</text>
        <text x="1453.5" y="712" textLength="33" lengthAdjust="spacingAndGlyphs">Hsp=2.63</text>
        <text x="1771" y="714" textLength="33" lengthAdjust="spacingAndGlyphs">Hsp=2.50</text>
        <g font-size="12">
          <text x="891.5" y="299.3" textLength="17" lengthAdjust="spacingAndGlyphs">5.49</text>
          <text x="891.5" y="549.3" textLength="17" lengthAdjust="spacingAndGlyphs">2.89</text>
          <text x="1730" y="299.3" textLength="17" lengthAdjust="spacingAndGlyphs">5.49</text>
          <text x="1730" y="549.3" textLength="17" lengthAdjust="spacingAndGlyphs">2.89</text>
          <text x="890" y="580" textLength="17" lengthAdjust="spacingAndGlyphs">2.63</text>
          <text x="1204.8" y="580" textLength="17" lengthAdjust="spacingAndGlyphs">2.63</text>
          <text x="890" y="832.3" textLength="17" lengthAdjust="spacingAndGlyphs">0.09</text>
          <text x="1204.8" y="832.3" textLength="17" lengthAdjust="spacingAndGlyphs">0.09</text>
          <text x="1730" y="589.3" textLength="17" lengthAdjust="spacingAndGlyphs">2.54</text>
          <text x="1730" y="827.7" textLength="17" lengthAdjust="spacingAndGlyphs">0.04</text>
        </g>
      </g>
    </g>

    <!-- compass -->
    <g transform="translate(1780 890) scale(.3333)">
      <circle cx="240" cy="175" r="65" fill="none" stroke="#b5bcc4" stroke-width="3"/>
      <path d="M240 65L254 150L240 175L226 150Z" fill="#fbd9a0"/>
      <path d="M130 175L205 160L240 175L205 188ZM350 175L275 160L240 175L275 188Z" fill="#a6b8c8"/>
      <path d="M240 285L254 205L240 175L226 205Z" fill="#a6b8c8"/>
      <path d="M226 205L240 175L232 235Z" fill="#f3cdb8"/>
      <path d="M240 175L254 150L240 65Z" fill="#f5c6a8" opacity=".6"/>
      <g font-family="Liberation Sans" font-size="27" fill="#9aa2aa" text-anchor="middle" dominant-baseline="central">
        <text x="240" y="45">N</text><text x="240" y="305">S</text><text x="120" y="175">O</text><text x="368" y="175">E</text>
      </g>
    </g>
  </svg>

  <!-- Status bar -->
  <div class="h-[23px] shrink-0 bg-[#f3f3f8] flex items-center text-[10.5px] text-[#333] whitespace-nowrap">
    <span class="ml-[9px] w-[1086px]">&gt;</span>
    <span class="w-[44px]">X Y Z :</span>
    <span class="w-[66px]">115.0511</span>
    <span class="w-[57px]">151.8100</span>
    <span class="w-[151px]">0.0000</span>
    <div class="w-px h-[18px] bg-[#d8d8e0]"></div>
    <svg class="ml-[12px] w-[22px] h-[18px]" viewBox="0 0 22 18"><path d="M8.5 4.5A6.5 6.5 0 1 1 5 9" fill="none" stroke="#222" stroke-width="1.7"/><path d="M10 1V8L5 4.5Z" fill="#222"/></svg>
    <div class="ml-[12px] w-px h-[18px] bg-[#d8d8e0]"></div>
    <svg class="ml-[11px] w-[22px] h-[18px]" viewBox="0 0 22 18"><path d="M6 2H13L17 6V16H6Z" fill="#f0f0f6" stroke="#c9cbe0"/><text x="11" y="14" font-size="7" font-family="Liberation Sans" fill="#b8bad0" text-anchor="middle">P</text></svg>
    <svg class="ml-[5px] w-[22px] h-[18px]" viewBox="0 0 22 18"><path d="M6 2V14H19M8 5V11H13" fill="none" stroke="#222" stroke-width="1.5"/><path d="M3.5 5L6 1L8.5 5ZM17 11.500L20.500 14L17 16.500Z" fill="#222"/></svg>
    <svg class="ml-[1px] w-[22px] h-[18px]" viewBox="0 0 22 18"><path d="M11 0L18 17L11 13L4 17Z" fill="#2f56e0"/></svg>
    <svg class="ml-[2px] w-[22px] h-[18px]" viewBox="0 0 22 18"><path d="M4 3H12A6 6 0 0 1 12 15H4M4 7H12A2 2 0 0 1 12 11H4" fill="none" stroke="#222" stroke-width="1.8"/></svg>
    <div class="ml-[12px] w-px h-[18px] bg-[#d8d8e0]"></div>
    <svg class="ml-[12px] w-[22px] h-[18px]" viewBox="0 0 22 18"><path d="M7 2H4V6M15 2H18V6M7 16H4V12M15 16H18V12" fill="none" stroke="#222" stroke-width="1.6"/></svg>
    <svg class="ml-[3px] w-[22px] h-[18px]" viewBox="0 0 22 18"><path d="M8 2H4V6M14 2H18V6M8 16H4V12M14 16H18V12M7 5L15 13M15 5L7 13" fill="none" stroke="#222" stroke-width="1.5"/></svg>
    <svg class="ml-[2px] w-[22px] h-[18px]" viewBox="0 0 22 18"><path d="M4 9.500H18" stroke="#222" stroke-width="1.8"/></svg>
    <svg class="ml-[2px] w-[22px] h-[18px]" viewBox="0 0 22 18"><path d="M3 9.500H19M11 2V17" stroke="#222" stroke-width="1.8"/></svg>
    <div class="ml-[12px] w-px h-[18px] bg-[#d8d8e0]"></div>
    <div class="ml-[22px] w-[189px] h-[6px] bg-[#e0e0e6] relative"><div class="absolute left-0 top-[-1px] w-[2px] h-[8px] bg-[#2f7fe0]"></div></div>
  </div>
</div>
</body>
</html>
